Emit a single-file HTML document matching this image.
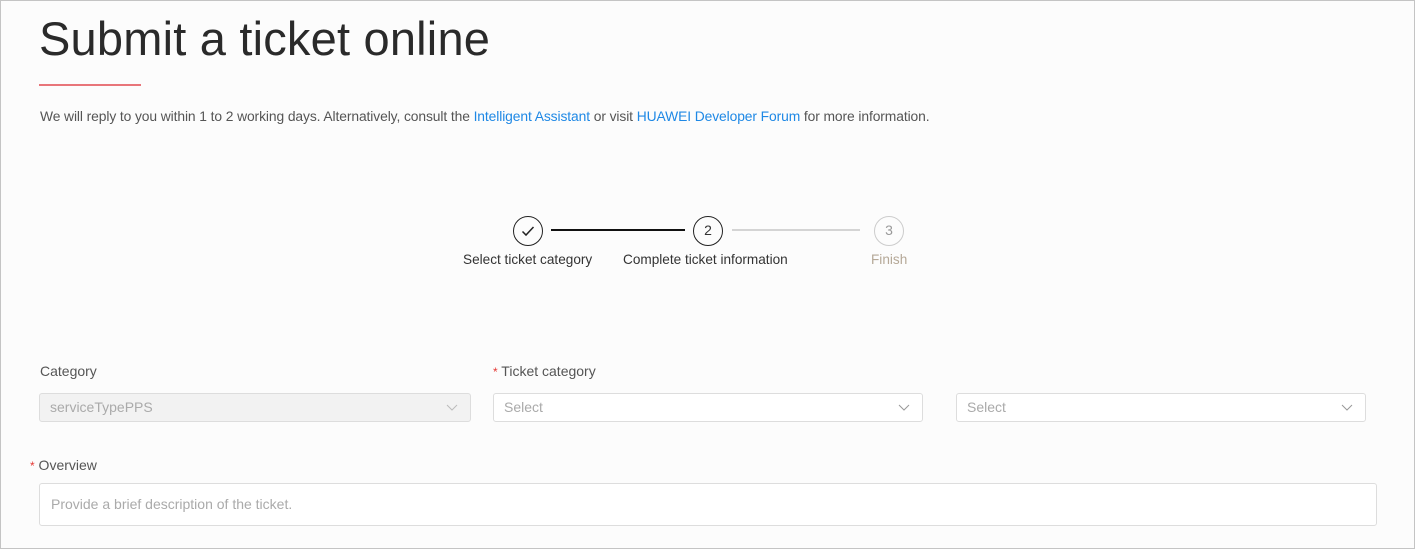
<!DOCTYPE html>
<html><head><meta charset="utf-8"><style>
*{margin:0;padding:0;box-sizing:border-box}
html,body{width:1415px;height:549px;overflow:hidden;background:#fff}
body{font-family:"Liberation Sans","DejaVu Sans",sans-serif;position:relative}
.frame{position:absolute;left:0;top:0;width:1415px;height:549px;box-shadow:inset 0 0 0 1px #c4c4c4;background:#fcfcfc}
.a{position:absolute;white-space:nowrap}
h1{position:absolute;left:39px;top:11px;font-size:47px;font-weight:400;color:#2a2a2a;letter-spacing:0.2px}
.red{position:absolute;left:39px;top:84px;width:102px;height:2px;background:#e8757a}
.intro{left:40px;top:108px;font-size:13.85px;color:#555;letter-spacing:-0.1px}
.intro span{color:#1e88e5}
.c{position:absolute;width:30px;height:30px;border-radius:50%;border:1.5px solid #222;text-align:center;line-height:27px;font-size:14px;color:#333;background:#fcfcfc}
.sel{position:absolute;height:29px;border:1px solid #ddd;border-radius:3px;background:#fff;font-size:14px;color:#aaa;padding-left:10px;line-height:27px}
.sel svg{position:absolute;right:12px;top:10px}
.lbl{font-size:14px;color:#555}
.star{color:#e53935;font-size:12px}
.st{font-size:13.6px}
</style></head><body><div class="frame">
<h1>Submit a ticket online</h1>
<div class="red"></div>
<div class="a intro">We will reply to you within 1 to 2 working days. Alternatively, consult the <span>Intelligent Assistant</span> or visit <span>HUAWEI Developer Forum</span> for more information.</div>

<div class="c" style="left:513px;top:216px"><svg width="14" height="12" viewBox="0 0 14 12" style="margin-top:8px"><path d="M1.5 6.5 L5 10 L12.5 2" fill="none" stroke="#222" stroke-width="1.5"/></svg></div>
<div class="a" style="left:551px;top:229px;width:134px;height:2px;background:#111"></div>
<div class="c" style="left:693px;top:216px">2</div>
<div class="a" style="left:732px;top:229px;width:128px;height:2px;background:#d4d4d4"></div>
<div class="c" style="left:874px;top:216px;border-color:#ccc;color:#999;border-width:1px">3</div>
<div class="a st" style="left:463px;top:252px;color:#333">Select ticket category</div>
<div class="a st" style="left:623px;top:252px;color:#333">Complete ticket information</div>
<div class="a st" style="left:871px;top:252px;color:#b5a897">Finish</div>

<div class="a lbl" style="left:40px;top:363px">Category</div>
<div class="a lbl" style="left:493px;top:363px"><span class="star">*</span> Ticket category</div>
<div class="sel" style="left:39px;top:393px;width:432px;background:#f2f2f2;color:#aaa">serviceTypePPS<svg width="12" height="8"><path d="M1 1 L6 6 L11 1" fill="none" stroke="#bbb" stroke-width="1"/></svg></div>
<div class="sel" style="left:493px;top:393px;width:430px">Select<svg width="12" height="8"><path d="M1 1 L6 6 L11 1" fill="none" stroke="#999" stroke-width="1"/></svg></div>
<div class="sel" style="left:956px;top:393px;width:410px">Select<svg width="12" height="8"><path d="M1 1 L6 6 L11 1" fill="none" stroke="#999" stroke-width="1"/></svg></div>

<div class="a lbl" style="left:30px;top:457px"><span class="star">*</span> Overview</div>
<div class="sel" style="left:39px;top:483px;width:1338px;height:43px;line-height:41px;padding-left:11px">Provide a brief description of the ticket.</div>
</div></body></html>
